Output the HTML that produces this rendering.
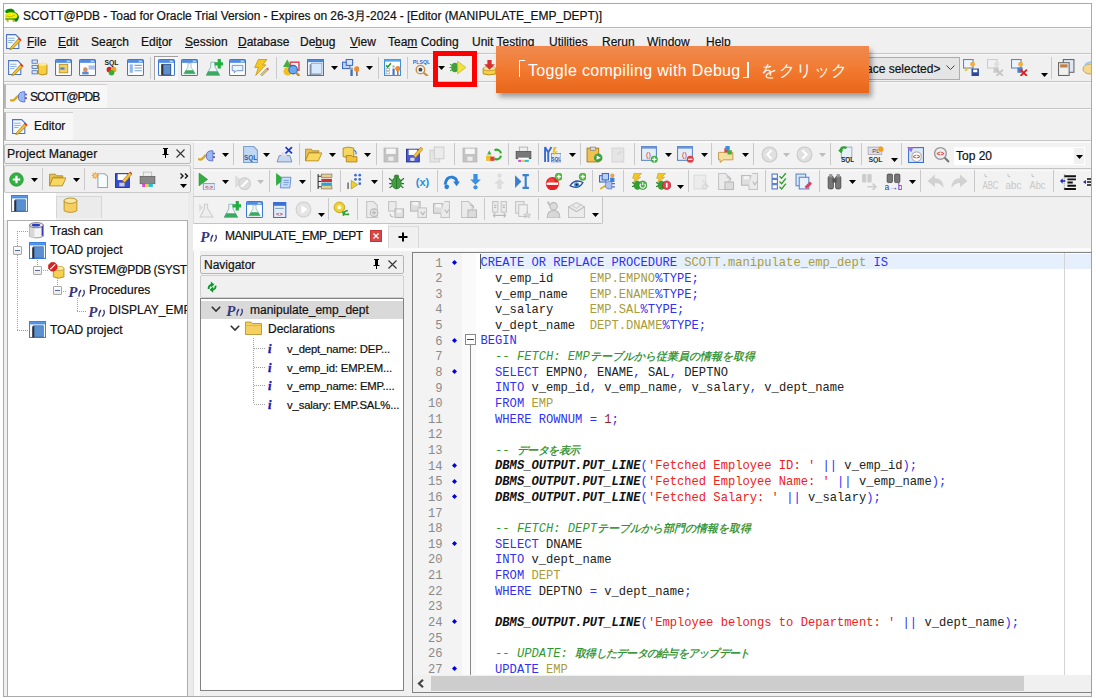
<!DOCTYPE html><html><head><meta charset="utf-8"><style>
html,body{margin:0;padding:0;background:#fff;width:1096px;height:698px;overflow:hidden}
body{position:relative;font-family:"Liberation Sans",sans-serif;font-size:12px;color:#000}
div{position:absolute;box-sizing:border-box}
.t{white-space:pre;line-height:14px;-webkit-text-stroke:0.2px currentColor}
.code{font-family:"Liberation Mono",monospace;font-size:12.13px;line-height:15.6px;white-space:pre;color:#222}
.kw{color:#3030f0}.id{color:#a89c3c}.cm{color:#2e9a2e;font-style:italic}.st{color:#f02020}.pk{font-weight:bold;font-style:italic;color:#111}.nu{color:#9a2020}.pu{color:#3030f0}
.jp{font-size:11px;color:#1a8a1a;-webkit-text-stroke:0.25px #1a8a1a}
u{text-decoration:underline;text-underline-offset:1px}
</style></head><body>
<svg width="0" height="0" style="position:absolute"><filter id="gray"><feColorMatrix type="saturate" values="0"/></filter></svg>

<div style="left:3px;top:3px;width:1089px;height:694px;border:1px solid #a9a9a9;background:#f0f0f0"></div>
<div style="left:4px;top:4px;width:1087px;height:23px;background:#fff"></div>
<div style="left:4px;top:27px;width:1087px;height:1px;background:#b5b5b5"></div>
<div style="left:4px;top:28px;width:1087px;height:1px;background:#f8f8f8"></div>
<svg style="position:absolute;left:4px;top:7px" width="16" height="16" viewBox="0 0 16 16"><path d="M5 3L8 0.5L7 3Z" fill="#8ad08a"/><path d="M0 3L3 4L1 6Z" fill="#9ad09a"/><ellipse cx="6" cy="4.5" rx="4.5" ry="2.8" fill="#0a8a0a"/><path d="M9 5Q14 5 15 10Q15 13 12 15L10 13Z" fill="#0a7a0a"/><ellipse cx="7" cy="9" rx="6.5" ry="3.8" fill="#f2f000"/><path d="M2 9Q7 11 11 8" stroke="#c8b800" fill="none"/><path d="M3 12L4 15M9 12L10 15" stroke="#c8c010" stroke-width="2"/><path d="M1 12H12" stroke="#0a8a0a" stroke-width="1"/></svg>
<div class="t" style="left:23px;top:9px;font-size:12px;color:#111;letter-spacing:-0.05px">SCOTT@PDB - Toad for Oracle Trial Version - Expires on 26-3月-2024 - [Editor (MANIPULATE_EMP_DEPT)]</div>
<div style="left:4px;top:53px;width:1087px;height:1px;background:#c6c6c6"></div>
<div style="left:4px;top:54px;width:1087px;height:1px;background:#f8f8f8"></div>
<svg style="position:absolute;left:5px;top:33px" width="17" height="17" viewBox="0 0 16 16"><path d="M1.5 1.5H10L13 4.5V14.5H1.5Z" fill="#f4f8ff" stroke="#4a72c4"/><path d="M3 5H9M3 7H9M3 9H7" stroke="#8fb0e0"/><path d="M5 14L13 5L15 7L7 15L4.5 15.5Z" fill="#f2c230" stroke="#8a6a10" stroke-width="0.6"/><path d="M12.3 5.7L13.5 4.3L15.5 6.3L14.3 7.5Z" fill="#e03030"/></svg>
<div class="t" style="left:27px;top:35px;font-size:12px;color:#111"><u>F</u>ile</div>
<div class="t" style="left:58px;top:35px;font-size:12px;color:#111"><u>E</u>dit</div>
<div class="t" style="left:91px;top:35px;font-size:12px;color:#111">Sea<u>r</u>ch</div>
<div class="t" style="left:141px;top:35px;font-size:12px;color:#111">Edi<u>t</u>or</div>
<div class="t" style="left:185px;top:35px;font-size:12px;color:#111"><u>S</u>ession</div>
<div class="t" style="left:238px;top:35px;font-size:12px;color:#111"><u>D</u>atabase</div>
<div class="t" style="left:300px;top:35px;font-size:12px;color:#111">De<u>b</u>ug</div>
<div class="t" style="left:350px;top:35px;font-size:12px;color:#111"><u>V</u>iew</div>
<div class="t" style="left:388px;top:35px;font-size:12px;color:#111">Tea<u>m</u> Coding</div>
<div class="t" style="left:472px;top:35px;font-size:12px;color:#111">Unit Testing</div>
<div class="t" style="left:549px;top:35px;font-size:12px;color:#111">Utilities</div>
<div class="t" style="left:602px;top:35px;font-size:12px;color:#111">Rerun</div>
<div class="t" style="left:647px;top:35px;font-size:12px;color:#111">Window</div>
<div class="t" style="left:706px;top:35px;font-size:12px;color:#111">Help</div>
<div style="left:4px;top:81px;width:1087px;height:1px;background:#c6c6c6"></div>
<div style="left:4px;top:82px;width:1087px;height:1px;background:#f8f8f8"></div>
<svg style="position:absolute;left:7px;top:59px" width="17" height="17" viewBox="0 0 16 16"><path d="M1.5 1.5H10L13 4.5V14.5H1.5Z" fill="#f4f8ff" stroke="#4a72c4"/><path d="M3 5H9M3 7H9M3 9H7" stroke="#8fb0e0"/><path d="M5 14L13 5L15 7L7 15L4.5 15.5Z" fill="#f2c230" stroke="#8a6a10" stroke-width="0.6"/><path d="M12.3 5.7L13.5 4.3L15.5 6.3L14.3 7.5Z" fill="#e03030"/></svg>
<svg style="position:absolute;left:31px;top:59px" width="17" height="17" viewBox="0 0 16 16"><rect x="1" y="1" width="5" height="3" fill="#dfe8f8" stroke="#4a72c4" stroke-width="0.8"/><rect x="1" y="6" width="5" height="3" fill="#dfe8f8" stroke="#4a72c4" stroke-width="0.8"/><rect x="1" y="11" width="5" height="3" fill="#dfe8f8" stroke="#4a72c4" stroke-width="0.8"/><path d="M7 5Q11 3 15 5V14Q11 16 7 14Z" fill="#f5cf40" stroke="#b08010" stroke-width="0.8"/><ellipse cx="11" cy="5" rx="4" ry="1.5" fill="#fbe89a"/></svg>
<svg style="position:absolute;left:55px;top:59px" width="17" height="17" viewBox="0 0 16 16"><rect x="0.5" y="0.5" width="15" height="15" rx="1" fill="#fff" stroke="#3a78d8"/><rect x="1" y="1" width="14" height="2.6" fill="#4a8ae6"/><rect x="11" y="1.5" width="3" height="1.5" fill="#c8d4e8"/><rect x="4" y="5" width="8" height="8" fill="#f4d060" stroke="#b09020" stroke-width="0.8"/><rect x="5" y="8" width="4" height="2" fill="#4a80d0"/></svg>
<svg style="position:absolute;left:79px;top:59px" width="17" height="17" viewBox="0 0 16 16"><rect x="0.5" y="0.5" width="15" height="15" rx="1" fill="#fff" stroke="#3a78d8"/><rect x="1" y="1" width="14" height="2.6" fill="#4a8ae6"/><rect x="11" y="1.5" width="3" height="1.5" fill="#c8d4e8"/><circle cx="6" cy="10" r="2.2" fill="#d09060"/><rect x="3" y="12" width="6" height="2.5" fill="#5a8ad0"/><path d="M9 6H15V10H9Z" fill="#a9c0e8"/></svg>
<svg style="position:absolute;left:103px;top:59px" width="17" height="17" viewBox="0 0 16 16"><text x="8" y="6" font-size="6.5" font-family="Liberation Sans" font-weight="bold" text-anchor="middle" fill="#222">SQL</text><circle cx="6" cy="10" r="2.6" fill="#e02020"/><circle cx="10" cy="10" r="2.6" fill="#f0a020"/><circle cx="8" cy="13" r="2.6" fill="#30b030"/></svg>
<svg style="position:absolute;left:127px;top:59px" width="17" height="17" viewBox="0 0 16 16"><rect x="0.5" y="0.5" width="15" height="15" rx="1" fill="#fff" stroke="#3a78d8"/><rect x="1" y="1" width="14" height="2.6" fill="#4a8ae6"/><rect x="11" y="1.5" width="3" height="1.5" fill="#c8d4e8"/><rect x="2.5" y="5" width="3" height="8" fill="#8fb8f0"/><path d="M7 6H14M7 8.5H14M7 11H14" stroke="#7aa0d8"/></svg>
<div style="left:150px;top:57px;width:1px;height:22px;background:#c9c9c9"></div>
<div style="left:154px;top:56px;width:24px;height:24px;border-top:1px solid #a0a0a0;border-left:1px solid #a0a0a0;background:#f8f8f8"></div>
<svg style="position:absolute;left:158px;top:59px" width="17" height="17" viewBox="0 0 16 16"><rect x="0.5" y="0.5" width="15" height="15" rx="1" fill="#fff" stroke="#3a78d8"/><rect x="1" y="1" width="14" height="2.6" fill="#4a8ae6"/><rect x="11" y="1.5" width="3" height="1.5" fill="#c8d4e8"/><rect x="4" y="5" width="8" height="10" fill="#5b8fd0" stroke="#2a4a80" stroke-width="0.8"/><rect x="3" y="5" width="2" height="10" fill="#333"/></svg>
<svg style="position:absolute;left:181px;top:59px" width="17" height="17" viewBox="0 0 16 16"><rect x="0.5" y="0.5" width="15" height="15" rx="1" fill="#fff" stroke="#3a78d8"/><rect x="1" y="1" width="14" height="2.6" fill="#4a8ae6"/><rect x="11" y="1.5" width="3" height="1.5" fill="#c8d4e8"/><path d="M6.5 4H9.5V7.5L13.5 14H2.5L6.5 7.5Z" fill="#eef6f6" stroke="#9ab8b8" stroke-width="0.7"/><path d="M4.5 10.5H11.5L13.3 13.8H2.7Z" fill="#3aaa60"/></svg>
<svg style="position:absolute;left:206px;top:59px" width="17" height="17" viewBox="0 0 16 16"><path d="M4.5 3H8.5V7.5L13 15.5H0L4.5 7.5Z" fill="#eef6f6" stroke="#8ab0b0" stroke-width="0.8"/><path d="M2 11.5H11L13 15.3H0.2Z" fill="#3aaa60"/><path d="M11 0H14V3H16.5V6H14V9H11V6H8V3H11Z" fill="#20b040"/></svg>
<svg style="position:absolute;left:229px;top:59px" width="17" height="17" viewBox="0 0 16 16"><rect x="0.5" y="0.5" width="15" height="15" rx="1" fill="#fff" stroke="#3a78d8"/><rect x="1" y="1" width="14" height="2.6" fill="#4a8ae6"/><rect x="11" y="1.5" width="3" height="1.5" fill="#c8d4e8"/><path d="M3 6H13V11H7L5 13V11H3Z" fill="#eef4ff" stroke="#5a86c8" stroke-width="0.8"/></svg>
<svg style="position:absolute;left:252px;top:59px" width="17" height="17" viewBox="0 0 16 16"><path d="M6 0.5H14L10 5.5H13L3.5 15.5L6 8H2.5Z" fill="#f5c820" stroke="#c09010" stroke-width="0.7"/><path d="M8 14.5L13.5 9L15 10.5L9.5 16Z" fill="#d8c070" stroke="#777" stroke-width="0.4"/><path d="M13.5 9L14.5 8L16 9.5L15 10.5Z" fill="#e05050"/></svg>
<div style="left:276px;top:57px;width:1px;height:22px;background:#c9c9c9"></div>
<svg style="position:absolute;left:283px;top:59px" width="17" height="17" viewBox="0 0 16 16"><path d="M4 0.5L8 7.5H0Z" fill="#40b040"/><rect x="7" y="3" width="8" height="7.5" fill="#f4f4f4" stroke="#e05060" stroke-width="1.5"/><circle cx="4.5" cy="11.5" r="4" fill="#f0c020"/><circle cx="9.5" cy="10" r="4" fill="#6aa8f0" stroke="#2a60c0" stroke-width="1"/><path d="M12.5 13L15.5 16" stroke="#c09020" stroke-width="2.2"/></svg>
<svg style="position:absolute;left:307px;top:59px" width="17" height="17" viewBox="0 0 16 16"><rect x="0.5" y="0.5" width="15" height="15" fill="#fff" stroke="#3a70d8"/><rect x="0.5" y="0.5" width="15" height="2.5" fill="#4a88e0"/><rect x="4" y="4" width="10" height="10" fill="#d8e8fc" stroke="#7aa0d8" stroke-width="0.8"/><path d="M3 5V15H13" stroke="#5a6a88" stroke-width="1" fill="none"/></svg>
<svg style="position:absolute;left:331px;top:66px" width="7" height="4" viewBox="0 0 7 4"><path d="M0 0H7L3.5 4Z" fill="#000"/></svg>
<svg style="position:absolute;left:342px;top:59px" width="17" height="17" viewBox="0 0 16 16"><rect x="0.5" y="3" width="7" height="6" fill="#c0d4f8" stroke="#3a6ac8"/><rect x="4" y="0.5" width="6" height="5.5" fill="#d8e4fa" stroke="#3a6ac8"/><path d="M9 9.5V16" stroke="#3a70c0" stroke-width="2.2"/><path d="M7.6 9H10.4" stroke="#9aa" stroke-width="2"/><path d="M14 11V16" stroke="#777" stroke-width="1.6"/><circle cx="14" cy="9.5" r="2.6" fill="#f08a30"/></svg>
<svg style="position:absolute;left:366px;top:66px" width="7" height="4" viewBox="0 0 7 4"><path d="M0 0H7L3.5 4Z" fill="#000"/></svg>
<div style="left:378px;top:57px;width:1px;height:22px;background:#c9c9c9"></div>
<svg style="position:absolute;left:384px;top:59px" width="17" height="17" viewBox="0 0 16 16"><rect x="0.5" y="0.5" width="15" height="15" fill="#fff" stroke="#3a90e0"/><rect x="0.5" y="0.5" width="15" height="2" fill="#5aa8f0"/><path d="M2 6L3.5 7.5L6.5 4" stroke="#20a020" stroke-width="1.5" fill="none"/><rect x="2" y="9" width="3" height="2" fill="#fff" stroke="#999" stroke-width="0.6"/><rect x="2" y="12" width="3" height="2" fill="#fff" stroke="#999" stroke-width="0.6"/><path d="M9 9V15" stroke="#3a70d0" stroke-width="2"/><path d="M8 7H10" stroke="#aaa" stroke-width="2"/><path d="M13 11V15" stroke="#777" stroke-width="1.4"/><circle cx="13" cy="9" r="2.4" fill="#f08a30"/></svg>
<div style="left:407px;top:57px;width:1px;height:22px;background:#c9c9c9"></div>
<svg style="position:absolute;left:413px;top:59px" width="17" height="17" viewBox="0 0 16 16"><text x="8" y="5" font-size="5" font-family="Liberation Sans" font-weight="bold" text-anchor="middle" fill="#3a6ad0">PLSQL</text><circle cx="7" cy="10" r="4" fill="#e8eef4" stroke="#c89040" stroke-width="1.3"/><circle cx="7" cy="10" r="1.8" fill="#444"/><path d="M10 13L14 16" stroke="#c89040" stroke-width="2"/></svg>
<svg style="position:absolute;left:438px;top:66px" width="7" height="4" viewBox="0 0 7 4"><path d="M0 0H7L3.5 4Z" fill="#000"/></svg>
<svg style="position:absolute;left:449px;top:59px" width="17" height="17" viewBox="0 0 16 16"><ellipse cx="5.5" cy="8" rx="3.5" ry="4.5" fill="#40a040"/><path d="M1 5L3 6M1 11L3 10M0.5 8H2" stroke="#40a040"/><path d="M8 2L16 8L8 14Z" fill="#f0e040" stroke="#c0b020" stroke-width="0.6"/></svg>
<svg style="position:absolute;left:481px;top:59px" width="17" height="17" viewBox="0 0 16 16"><path d="M2 9H14V14Q8 16 2 14Z" fill="#f5d040" stroke="#b08010" stroke-width="0.8"/><ellipse cx="8" cy="9" rx="6" ry="2" fill="#fbe8a0" stroke="#b08010" stroke-width="0.6"/><path d="M6 1H10V5H13L8 10L3 5H6Z" fill="#d83030"/></svg>
<div style="left:840px;top:57px;width:120px;height:23px;background:#e5e5e5;border:1px solid #adadad"></div>
<div class="t" style="left:866px;top:62px;font-size:12px;color:#111">ace selected&gt;</div>
<svg style="position:absolute;left:946px;top:65px" width="9" height="6" viewBox="0 0 9 6"><path d="M0.5 0.5L4.5 4.5L8.5 0.5" stroke="#444" fill="none"/></svg>
<svg style="position:absolute;left:963px;top:59px" width="17" height="17" viewBox="0 0 16 16"><rect x="0.5" y="0.5" width="9" height="8" fill="#eef4ff" stroke="#5a86c8"/><circle cx="9" cy="5" r="2.3" fill="#f0b040"/><path d="M5 8L2 11" stroke="#f0c040" stroke-width="2"/><rect x="8" y="9" width="7" height="7" fill="#2a4a98"/><rect x="9.5" y="10" width="4" height="2.5" fill="#fff"/></svg>
<svg style="position:absolute;left:987px;top:59px" width="17" height="17" viewBox="0 0 16 16"><g opacity="0.32" filter="url(#gray)"><rect x="0.5" y="0.5" width="9" height="8" fill="#eef4ff" stroke="#5a86c8"/><circle cx="9" cy="5" r="2.3" fill="#f0b040"/><rect x="6" y="8" width="5" height="5" fill="#4a80d0"/><path d="M9 10L15 16M15 10L9 16" stroke="#e02020" stroke-width="1.8"/></g></svg>
<svg style="position:absolute;left:1011px;top:59px" width="17" height="17" viewBox="0 0 16 16"><rect x="0.5" y="0.5" width="9" height="8" fill="#eef4ff" stroke="#5a86c8"/><circle cx="9" cy="5" r="2.3" fill="#f0b040"/><rect x="6" y="8" width="5" height="5" fill="#4a80d0"/><path d="M9 10L15 16M15 10L9 16" stroke="#e02020" stroke-width="1.8"/></svg>
<svg style="position:absolute;left:1041px;top:73px" width="7" height="4" viewBox="0 0 7 4"><path d="M0 0H7L3.5 4Z" fill="#000"/></svg>
<div style="left:1051px;top:57px;width:1px;height:22px;background:#c9c9c9"></div>
<svg style="position:absolute;left:1058px;top:59px" width="17" height="17" viewBox="0 0 16 16"><rect x="5" y="0.5" width="10" height="12" fill="#dde8f4" stroke="#666"/><rect x="0.5" y="3.5" width="10" height="12" fill="#f0f0f0" stroke="#666"/><rect x="2" y="5" width="7" height="3" fill="#c08040"/></svg>
<div style="left:1081px;top:60px;width:10px;height:17px;overflow:hidden"></div>
<svg style="position:absolute;left:1081px;top:60px" width="10" height="17" viewBox="0 0 10 17"><ellipse cx="9" cy="9" rx="7" ry="5" fill="#f5d890" stroke="#c09040" stroke-width="0.8"/><path d="M4 5Q9 0 14 4" stroke="#9ac8f0" stroke-width="2" fill="none"/></svg>
<div style="left:4px;top:108px;width:1087px;height:1px;background:#c6c6c6"></div>
<div style="left:4px;top:109px;width:1087px;height:1px;background:#f8f8f8"></div>
<div style="left:4px;top:84px;width:103px;height:24px;background:#f7f7f7;border-top:1px solid #cfcfcf;border-left:2px solid #b8b8b8"></div>
<svg style="position:absolute;left:10px;top:87px" width="17" height="17" viewBox="0 0 16 16"><path d="M1 12.5Q3 13.5 5 11T8.5 8.5" stroke="#d8a820" stroke-width="2.3" fill="none" stroke-linecap="round"/><path d="M8 8.5Q8 5 12 4.5H14V14H12Q8 13.5 8 10.5Z" fill="#9ab8f4" stroke="#5a6ac8" stroke-width="0.8"/><path d="M14 7H16.5M14 10.5H16.5" stroke="#6a5ab0" stroke-width="1.5"/></svg>
<div class="t" style="left:30px;top:90px;font-size:12px;color:#111;letter-spacing:-0.9px">SCOTT@PDB</div>
<div style="left:4px;top:140px;width:1087px;height:1px;background:#c6c6c6"></div>
<div style="left:4px;top:141px;width:1087px;height:1px;background:#fafafa"></div>
<div style="left:4px;top:112px;width:69px;height:28px;background:#f7f7f7;border-top:1px solid #cfcfcf;border-left:2px solid #b8b8b8"></div>
<svg style="position:absolute;left:11px;top:118px" width="17" height="17" viewBox="0 0 16 16"><path d="M1.5 1.5H10L13 4.5V14.5H1.5Z" fill="#f4f8ff" stroke="#4a72c4"/><path d="M3 5H9M3 7H9M3 9H7" stroke="#8fb0e0"/><path d="M5 14L13 5L15 7L7 15L4.5 15.5Z" fill="#f2c230" stroke="#8a6a10" stroke-width="0.6"/><path d="M12.3 5.7L13.5 4.3L15.5 6.3L14.3 7.5Z" fill="#e03030"/></svg>
<div class="t" style="left:34px;top:119px;font-size:12px;color:#111">Editor</div>
<div style="left:4px;top:144px;width:187px;height:20px;border:1px solid #b9b9b9;border-radius:2px;background:#f0f0f0"></div>
<div class="t" style="left:7px;top:147px;font-size:12.3px;color:#111">Project Manager</div>
<svg style="position:absolute;left:161px;top:147px" width="9" height="12" viewBox="0 0 9 12"><path d="M2 1H7V2H6V7H7.5V8H5V11H4V8H1.5V7H3V2H2Z" fill="#000"/></svg>
<svg style="position:absolute;left:176px;top:149px" width="9" height="9" viewBox="0 0 9 9"><path d="M0.5 0.5L8.5 8.5M8.5 0.5L0.5 8.5" stroke="#333" stroke-width="1.1"/></svg>
<div style="left:4px;top:165px;width:187px;height:28px;border:1px solid #c9c9c9;border-radius:2px;background:#f0f0f0"></div>
<svg style="position:absolute;left:9px;top:172px" width="15" height="15" viewBox="0 0 16 16"><circle cx="8" cy="8" r="7.3" fill="#30b040" stroke="#208030" stroke-width="0.6"/><path d="M8 4V12M4 8H12" stroke="#fff" stroke-width="2.3"/></svg>
<svg style="position:absolute;left:31px;top:178px" width="7" height="4" viewBox="0 0 7 4"><path d="M0 0H7L3.5 4Z" fill="#000"/></svg>
<div style="left:42px;top:168px;width:1px;height:22px;background:#c9c9c9"></div>
<svg style="position:absolute;left:49px;top:171px" width="17" height="17" viewBox="0 0 16 16"><path d="M0.5 3H6L7 4.5H13V6H4L0.5 14Z" fill="#e8c050" stroke="#b08a20" stroke-width="0.8"/><path d="M3.5 6.5H16L12.5 14H0.5Z" fill="#f8d860" stroke="#b08a20" stroke-width="0.8"/></svg>
<svg style="position:absolute;left:73px;top:178px" width="7" height="4" viewBox="0 0 7 4"><path d="M0 0H7L3.5 4Z" fill="#000"/></svg>
<div style="left:84px;top:168px;width:1px;height:22px;background:#c9c9c9"></div>
<svg style="position:absolute;left:91px;top:171px" width="17" height="17" viewBox="0 0 16 16"><path d="M6.5 2.5H13L15.5 5V15.5H6.5Z" fill="#f8fbfb" stroke="#9aa8a8"/><path d="M4 0.5L4.8 2.6L6.8 1.5L6 3.6L8 4.3L6 5L6.8 7.1L4.8 6L4 8L3.2 6L1.2 7.1L2 5L0 4.3L2 3.6L1.2 1.5L3.2 2.6Z" fill="#ff9a30"/><circle cx="4" cy="4.3" r="1.5" fill="#ffd080"/></svg>
<svg style="position:absolute;left:115px;top:171px" width="17" height="17" viewBox="0 0 16 16"><rect x="0.5" y="2.5" width="13" height="13" fill="#3a4ad0" stroke="#1a2a80" stroke-width="0.8"/><rect x="2.5" y="3" width="9" height="5.5" fill="#fff"/><rect x="4" y="11" width="5" height="3.5" fill="#ccd"/><path d="M7 9L14 1L16 3L9 11Z" fill="#f0c040" stroke="#a07010" stroke-width="0.5"/><path d="M14 1L16 3" stroke="#e05030" stroke-width="1.5"/></svg>
<svg style="position:absolute;left:139px;top:171px" width="17" height="17" viewBox="0 0 16 16"><rect x="4" y="1" width="8" height="5" fill="#eee" stroke="#aaa" stroke-width="0.6"/><rect x="1" y="5" width="14" height="7" fill="#888" stroke="#555" stroke-width="0.6"/><rect x="3" y="12" width="3" height="3" fill="#e040e0"/><rect x="6" y="12" width="3" height="3" fill="#f0d020"/><rect x="9" y="12" width="4" height="3" fill="#20c0e0"/></svg>
<svg style="position:absolute;left:180px;top:173px" width="9" height="6" viewBox="0 0 9 6"><path d="M0.5 0.5L3 3L0.5 5.5M5 0.5L7.5 3L5 5.5" stroke="#111" stroke-width="1.4" fill="none"/></svg>
<svg style="position:absolute;left:180px;top:184px" width="7" height="4" viewBox="0 0 7 4"><path d="M0 0H7L3.5 4Z" fill="#000"/></svg>
<div style="left:4px;top:193px;width:52px;height:27px;background:#fff"></div>
<svg style="position:absolute;left:11px;top:195px" width="17" height="17" viewBox="0 0 16 16"><rect x="0.5" y="0.5" width="15" height="15" fill="#fff" stroke="#3a80e0"/><rect x="1" y="1" width="14" height="2.2" fill="#4a90ea"/><rect x="4" y="4.5" width="9.5" height="10.5" fill="#5a90d0" stroke="#3a60a0" stroke-width="0.6"/><rect x="3" y="5" width="2" height="10.5" fill="#2a3040"/></svg>
<div style="left:56px;top:196px;width:46px;height:22px;background:#ebebeb;border:1px solid #d6d6d6;border-bottom:none"></div>
<svg style="position:absolute;left:62px;top:197px" width="17" height="17" viewBox="0 0 16 16"><path d="M2 3V13Q8 16 14 13V3Z" fill="#f5d060" stroke="#b08a20" stroke-width="0.8"/><ellipse cx="8" cy="3.5" rx="6" ry="2.5" fill="#fbe8a0" stroke="#b08a20" stroke-width="0.8"/></svg>
<div style="left:7px;top:220px;width:181px;height:476px;background:#fff;border:1px solid #adadad;border-bottom:none"></div>
<div style="left:17px;top:231px;width:1px;height:99px;background:repeating-linear-gradient(180deg,#a0a0a0 0 1px,transparent 1px 2px)"></div>
<div style="left:17px;top:231px;width:11px;height:1px;background:repeating-linear-gradient(90deg,#a0a0a0 0 1px,transparent 1px 2px)"></div>
<div style="left:17px;top:330px;width:11px;height:1px;background:repeating-linear-gradient(90deg,#a0a0a0 0 1px,transparent 1px 2px)"></div>
<div style="left:37px;top:258px;width:1px;height:12px;background:repeating-linear-gradient(180deg,#a0a0a0 0 1px,transparent 1px 2px)"></div>
<div style="left:41px;top:270px;width:7px;height:1px;background:repeating-linear-gradient(90deg,#a0a0a0 0 1px,transparent 1px 2px)"></div>
<div style="left:57px;top:278px;width:1px;height:12px;background:repeating-linear-gradient(180deg,#a0a0a0 0 1px,transparent 1px 2px)"></div>
<div style="left:61px;top:291px;width:6px;height:1px;background:repeating-linear-gradient(90deg,#a0a0a0 0 1px,transparent 1px 2px)"></div>
<div style="left:77px;top:298px;width:1px;height:13px;background:repeating-linear-gradient(180deg,#a0a0a0 0 1px,transparent 1px 2px)"></div>
<div style="left:77px;top:311px;width:10px;height:1px;background:repeating-linear-gradient(90deg,#a0a0a0 0 1px,transparent 1px 2px)"></div>
<div style="left:13px;top:246px;width:9px;height:9px;border:1px solid #a8a8a8;border-radius:1px;background:linear-gradient(#fff,#e8e8e8)"></div>
<div style="left:15px;top:250px;width:5px;height:1px;background:#5068a8"></div>
<div style="left:33px;top:266px;width:9px;height:9px;border:1px solid #a8a8a8;border-radius:1px;background:linear-gradient(#fff,#e8e8e8)"></div>
<div style="left:35px;top:270px;width:5px;height:1px;background:#5068a8"></div>
<div style="left:53px;top:286px;width:9px;height:9px;border:1px solid #a8a8a8;border-radius:1px;background:linear-gradient(#fff,#e8e8e8)"></div>
<div style="left:55px;top:290px;width:5px;height:1px;background:#5068a8"></div>
<div style="left:0;top:0;width:1096px;height:698px;clip-path:inset(221px 909px 2px 8px)">
<svg style="position:absolute;left:28px;top:222px" width="17" height="17" viewBox="0 0 16 16"><path d="M1.5 3V13.5Q8 16.5 14.5 13.5V3Z" fill="#f4f4f4" stroke="#888" stroke-width="0.8"/><path d="M1.5 3V13.5Q4 15 6 15V4Z" fill="#d8d8d8"/><ellipse cx="8" cy="3" rx="6.5" ry="2.4" fill="#e8e8f0" stroke="#666" stroke-width="0.8"/><ellipse cx="7.5" cy="3" rx="4" ry="1.3" fill="#2a3ac0"/><path d="M13.5 4V13" stroke="#3a3ab8" stroke-width="1.4"/></svg>
<div class="t" style="left:50px;top:224px;font-size:12px;color:#111">Trash can</div>
<svg style="position:absolute;left:29px;top:242px" width="17" height="17" viewBox="0 0 16 16"><rect x="0.5" y="0.5" width="15" height="15" fill="#fff" stroke="#3a80e0"/><rect x="1" y="1" width="14" height="2.2" fill="#4a90ea"/><rect x="4" y="4.5" width="9.5" height="10.5" fill="#5a90d0" stroke="#3a60a0" stroke-width="0.6"/><rect x="3" y="5" width="2" height="10.5" fill="#2a3040"/></svg>
<div class="t" style="left:50px;top:243px;font-size:12px;color:#111">TOAD project</div>
<svg style="position:absolute;left:48px;top:262px" width="17" height="17" viewBox="0 0 16 16"><path d="M5 6V14Q10 16.5 15 14V6Z" fill="#f5d050" stroke="#b08a20" stroke-width="0.8"/><ellipse cx="10" cy="6" rx="5" ry="2" fill="#fbe8a0" stroke="#b08a20" stroke-width="0.6"/><path d="M2.8 0.5H6.2L8.5 2.8V6.2L6.2 8.5H2.8L0.5 6.2V2.8Z" fill="#e02020" stroke="#b01010" stroke-width="0.5"/><path d="M2.2 6.8L6.8 2.2" stroke="#fff" stroke-width="1.1"/></svg>
<div class="t" style="left:69px;top:263px;font-size:12px;color:#111;letter-spacing:-0.45px">SYSTEM@PDB (SYSTE</div>
<svg style="position:absolute;left:68px;top:283px" width="19" height="16" viewBox="0 0 19 16"><text x="0.3" y="13.9" font-family="Liberation Serif" font-style="italic" font-weight="bold" font-size="15" fill="#38387e">P</text><path d="M13 7Q10.3 10.5 11.2 13.6" stroke="#38387e" stroke-width="1.3" fill="none"/><path d="M15.6 6.8Q17.6 10 14.2 13.6" stroke="#38387e" stroke-width="1.3" fill="none"/></svg>
<div class="t" style="left:89px;top:283px;font-size:12px;color:#111">Procedures</div>
<svg style="position:absolute;left:88px;top:303px" width="19" height="16" viewBox="0 0 19 16"><text x="0.3" y="13.9" font-family="Liberation Serif" font-style="italic" font-weight="bold" font-size="15" fill="#38387e">P</text><path d="M13 7Q10.3 10.5 11.2 13.6" stroke="#38387e" stroke-width="1.3" fill="none"/><path d="M15.6 6.8Q17.6 10 14.2 13.6" stroke="#38387e" stroke-width="1.3" fill="none"/></svg>
<div class="t" style="left:109px;top:303px;font-size:12px;color:#111">DISPLAY_EMP</div>
<svg style="position:absolute;left:29px;top:321px" width="17" height="17" viewBox="0 0 16 16"><rect x="0.5" y="0.5" width="15" height="15" fill="#fff" stroke="#3a80e0"/><rect x="1" y="1" width="14" height="2.2" fill="#4a90ea"/><rect x="4" y="4.5" width="9.5" height="10.5" fill="#5a90d0" stroke="#3a60a0" stroke-width="0.6"/><rect x="3" y="5" width="2" height="10.5" fill="#2a3040"/></svg>
<div class="t" style="left:50px;top:323px;font-size:12px;color:#111">TOAD project</div>
</div>
<div style="left:193px;top:142px;width:898px;height:27px;background:#f2f2f2;border-left:1px solid #dcdcdc;border-top:1px solid #fafafa;border-bottom:1px solid #c4c4c4"></div>
<div style="left:193px;top:170px;width:898px;height:27px;background:#f2f2f2;border-left:1px solid #dcdcdc;border-top:1px solid #fafafa;border-bottom:1px solid #c4c4c4"></div>
<div style="left:193px;top:197px;width:410px;height:27px;background:#f2f2f2;border-left:1px solid #dcdcdc;border-right:1px solid #c4c4c4;border-bottom:1px solid #c4c4c4;border-bottom-right-radius:2px"></div>
<svg style="position:absolute;left:198px;top:146px" width="17" height="17" viewBox="0 0 16 16"><path d="M1 12.5Q3 13.5 5 11T8.5 8.5" stroke="#d8a820" stroke-width="2.3" fill="none" stroke-linecap="round"/><path d="M8 8.5Q8 5 12 4.5H14V14H12Q8 13.5 8 10.5Z" fill="#9ab8f4" stroke="#5a6ac8" stroke-width="0.8"/><path d="M14 7H16.5M14 10.5H16.5" stroke="#6a5ab0" stroke-width="1.5"/></svg>
<svg style="position:absolute;left:222px;top:153px" width="7" height="4" viewBox="0 0 7 4"><path d="M0 0H7L3.5 4Z" fill="#000"/></svg>
<div style="left:233px;top:143px;width:1px;height:22px;background:#c9c9c9"></div>
<svg style="position:absolute;left:242px;top:146px" width="17" height="17" viewBox="0 0 16 16"><path d="M1.5 0.5H11L14.5 4V15.5H1.5Z" fill="#c0d8f4" stroke="#7aa0d0"/><text x="8" y="13" font-size="6" font-family="Liberation Sans" font-weight="bold" text-anchor="middle" fill="#2a5ab0">SQL</text></svg>
<svg style="position:absolute;left:263px;top:153px" width="7" height="4" viewBox="0 0 7 4"><path d="M0 0H7L3.5 4Z" fill="#000"/></svg>
<svg style="position:absolute;left:276px;top:146px" width="17" height="17" viewBox="0 0 16 16"><path d="M1 15L3 9H13L15 15Z" fill="#c8d8ec" stroke="#6a8ab8" stroke-width="0.8"/><rect x="5" y="6" width="5" height="4" fill="#dde"/><path d="M9 1L15 7M15 1L9 7" stroke="#1a3ad0" stroke-width="1.6"/></svg>
<div style="left:299px;top:143px;width:1px;height:22px;background:#c9c9c9"></div>
<svg style="position:absolute;left:305px;top:146px" width="17" height="17" viewBox="0 0 16 16"><path d="M0.5 3H6L7 4.5H13V6H4L0.5 14Z" fill="#e8c050" stroke="#b08a20" stroke-width="0.8"/><path d="M3.5 6.5H16L12.5 14H0.5Z" fill="#f8d860" stroke="#b08a20" stroke-width="0.8"/></svg>
<svg style="position:absolute;left:329px;top:153px" width="7" height="4" viewBox="0 0 7 4"><path d="M0 0H7L3.5 4Z" fill="#000"/></svg>
<svg style="position:absolute;left:341px;top:146px" width="17" height="17" viewBox="0 0 16 16"><path d="M2 2Q7 0 12 2V10Q7 12 2 10Z" fill="#f5d860" stroke="#b08010" stroke-width="0.8"/><path d="M5 9H10L11 10H15V15H5Z" fill="#f0c040" stroke="#b08010" stroke-width="0.8"/><path d="M12 4Q15 5 14 8" stroke="#3a70c0" fill="none"/></svg>
<svg style="position:absolute;left:364px;top:153px" width="7" height="4" viewBox="0 0 7 4"><path d="M0 0H7L3.5 4Z" fill="#000"/></svg>
<div style="left:376px;top:143px;width:1px;height:22px;background:#c9c9c9"></div>
<svg style="position:absolute;left:383px;top:146px" width="17" height="17" viewBox="0 0 16 16"><g opacity="0.32" filter="url(#gray)"><rect x="1" y="2" width="13" height="13" fill="#3a5ac8" stroke="#1a2a80" stroke-width="0.8"/><rect x="3" y="2.5" width="9" height="5" fill="#fff"/><rect x="5" y="10" width="5" height="4" fill="#ddd"/></g></svg>
<svg style="position:absolute;left:406px;top:146px" width="17" height="17" viewBox="0 0 16 16"><rect x="0.5" y="3" width="12" height="12" fill="#4a5ad8" stroke="#1a2a80" stroke-width="0.8"/><rect x="2.5" y="3.5" width="8" height="5" fill="#fff"/><rect x="4" y="11" width="4" height="3" fill="#ddd"/><path d="M7 9L14 1L16 3L9 11Z" fill="#f0c040" stroke="#a07010" stroke-width="0.5"/></svg>
<svg style="position:absolute;left:429px;top:146px" width="17" height="17" viewBox="0 0 16 16"><g opacity="0.32" filter="url(#gray)"><rect x="1" y="4" width="9" height="11" fill="#ccc" stroke="#888"/><rect x="5" y="1" width="9" height="11" fill="#ddd" stroke="#888"/></g></svg>
<div style="left:454px;top:143px;width:1px;height:22px;background:#c9c9c9"></div>
<svg style="position:absolute;left:462px;top:146px" width="17" height="17" viewBox="0 0 16 16"><g opacity="0.32" filter="url(#gray)"><rect x="1" y="2" width="13" height="13" fill="#3a5ac8" stroke="#1a2a80" stroke-width="0.8"/><rect x="3" y="2.5" width="9" height="5" fill="#fff"/><rect x="5" y="10" width="5" height="4" fill="#ddd"/></g></svg>
<svg style="position:absolute;left:485px;top:146px" width="17" height="17" viewBox="0 0 16 16"><path d="M2 8L4 4L6 8Z" fill="#40b040"/><rect x="1" y="9" width="5" height="5" fill="#f0c030"/><rect x="5" y="10" width="4" height="4" fill="#e04040"/><path d="M9 4A4 4 0 0 1 15 7" stroke="#30b030" stroke-width="2" fill="none"/><path d="M15 9A4 4 0 0 1 9 12" stroke="#30b030" stroke-width="2" fill="none"/></svg>
<div style="left:508px;top:143px;width:1px;height:22px;background:#c9c9c9"></div>
<svg style="position:absolute;left:515px;top:146px" width="17" height="17" viewBox="0 0 16 16"><rect x="4" y="1" width="8" height="5" fill="#eee" stroke="#999" stroke-width="0.6"/><rect x="1" y="5" width="14" height="7" fill="#777" stroke="#444" stroke-width="0.6"/><rect x="3" y="11" width="10" height="3" fill="#fff"/><path d="M3 14H6M6 14H9M9 14H13" stroke-width="2"/><rect x="3" y="13" width="3" height="2" fill="#e040e0"/><rect x="6" y="13" width="3" height="2" fill="#f0d020"/><rect x="9" y="13" width="4" height="2" fill="#20c0e0"/></svg>
<div style="left:538px;top:143px;width:1px;height:22px;background:#c9c9c9"></div>
<svg style="position:absolute;left:544px;top:146px" width="17" height="17" viewBox="0 0 16 16"><path d="M1 1V15M1 1L4 6L7 1M4 6V15" stroke="#3a6ad0" stroke-width="1.8" fill="none"/><rect x="7" y="7" width="9" height="8" fill="#dde8f8" stroke="#5a86c8" stroke-width="0.7"/><path d="M9 1L12 1L10 5H13L9 9L10 6H8Z" fill="#f0c020"/><text x="11.5" y="14" font-size="4.5" font-family="Liberation Sans" font-weight="bold" text-anchor="middle" fill="#2a5ab0">SQL</text></svg>
<svg style="position:absolute;left:569px;top:153px" width="7" height="4" viewBox="0 0 7 4"><path d="M0 0H7L3.5 4Z" fill="#000"/></svg>
<div style="left:580px;top:143px;width:1px;height:22px;background:#c9c9c9"></div>
<svg style="position:absolute;left:586px;top:146px" width="17" height="17" viewBox="0 0 16 16"><rect x="1" y="2" width="11" height="13" fill="#f0c050" stroke="#a07010" stroke-width="0.8"/><rect x="4" y="1" width="5" height="3" fill="#ddd" stroke="#777" stroke-width="0.6"/><circle cx="11.5" cy="11" r="4" fill="#40a040"/><path d="M10 9L14 11L10 13Z" fill="#fff"/></svg>
<svg style="position:absolute;left:611px;top:146px" width="17" height="17" viewBox="0 0 16 16"><g opacity="0.32" filter="url(#gray)"><rect x="1" y="2" width="11" height="13" fill="#ccc" stroke="#999"/><path d="M6 8L10 5" stroke="#aaa" stroke-width="2"/></g></svg>
<div style="left:634px;top:143px;width:1px;height:22px;background:#c9c9c9"></div>
<svg style="position:absolute;left:641px;top:146px" width="17" height="17" viewBox="0 0 16 16"><rect x="0.5" y="0.5" width="14" height="13" fill="#e4eef8" stroke="#5a86c8"/><rect x="0.5" y="0.5" width="14" height="2" fill="#6a96d8"/><text x="7" y="10" font-size="7" font-family="Liberation Sans" text-anchor="middle" fill="#d03030">()</text><circle cx="12.5" cy="12.5" r="3.3" fill="#40b040"/><path d="M12.5 10.5V14.5M10.5 12.5H14.5" stroke="#fff" stroke-width="1.2"/></svg>
<svg style="position:absolute;left:665px;top:153px" width="7" height="4" viewBox="0 0 7 4"><path d="M0 0H7L3.5 4Z" fill="#000"/></svg>
<svg style="position:absolute;left:677px;top:146px" width="17" height="17" viewBox="0 0 16 16"><rect x="0.5" y="0.5" width="14" height="13" fill="#e4eef8" stroke="#5a86c8"/><rect x="0.5" y="0.5" width="14" height="2" fill="#6a96d8"/><text x="7" y="10" font-size="7" font-family="Liberation Sans" text-anchor="middle" fill="#d03030">()</text><circle cx="12.5" cy="12.5" r="3.3" fill="#e04040"/><path d="M10.5 12.5H14.5" stroke="#fff" stroke-width="1.2"/></svg>
<svg style="position:absolute;left:701px;top:153px" width="7" height="4" viewBox="0 0 7 4"><path d="M0 0H7L3.5 4Z" fill="#000"/></svg>
<div style="left:711px;top:143px;width:1px;height:22px;background:#c9c9c9"></div>
<svg style="position:absolute;left:718px;top:146px" width="17" height="17" viewBox="0 0 16 16"><path d="M0.5 6H14V13H5L2 15.5V13H0.5Z" fill="#f5e0a0" stroke="#c09040" stroke-width="0.8"/><rect x="6" y="2" width="4" height="4" fill="#e04040"/><rect x="9" y="4" width="4" height="4" fill="#40b040"/><rect x="7" y="0" width="4" height="4" fill="#3a90e0"/></svg>
<svg style="position:absolute;left:742px;top:153px" width="7" height="4" viewBox="0 0 7 4"><path d="M0 0H7L3.5 4Z" fill="#000"/></svg>
<div style="left:753px;top:143px;width:1px;height:22px;background:#c9c9c9"></div>
<svg style="position:absolute;left:761px;top:146px" width="17" height="17" viewBox="0 0 16 16"><circle cx="8" cy="8" r="7" fill="#e0e0e0" stroke="#c8c8c8"/><path d="M10 4L6 8L10 12" stroke="#fff" stroke-width="2" fill="none"/></svg>
<svg style="position:absolute;left:783px;top:153px" width="7" height="4" viewBox="0 0 7 4"><path d="M0 0H7L3.5 4Z" fill="#bdbdbd"/></svg>
<svg style="position:absolute;left:796px;top:146px" width="17" height="17" viewBox="0 0 16 16"><circle cx="8" cy="8" r="7" fill="#e0e0e0" stroke="#c8c8c8"/><path d="M6 4L10 8L6 12" stroke="#fff" stroke-width="2" fill="none"/></svg>
<svg style="position:absolute;left:819px;top:153px" width="7" height="4" viewBox="0 0 7 4"><path d="M0 0H7L3.5 4Z" fill="#bdbdbd"/></svg>
<div style="left:830px;top:143px;width:1px;height:22px;background:#c9c9c9"></div>
<svg style="position:absolute;left:837px;top:146px" width="17" height="17" viewBox="0 0 16 16"><rect x="4" y="1" width="10" height="10" fill="#e8f0f8" stroke="#8a9ab0" stroke-width="0.7"/><path d="M3 4A4 4 0 0 1 9 2" stroke="#30a030" stroke-width="2" fill="none"/><path d="M1 4L4 7L6 3Z" fill="#30a030"/><text x="10" y="15.5" font-size="6" font-family="Liberation Sans" font-weight="bold" text-anchor="middle" fill="#222">SQL</text></svg>
<div style="left:861px;top:143px;width:1px;height:22px;background:#c9c9c9"></div>
<svg style="position:absolute;left:867px;top:146px" width="17" height="17" viewBox="0 0 16 16"><rect x="1" y="1" width="13" height="7" fill="#dde" stroke="#889" stroke-width="0.5"/><text x="5" y="7" font-size="5.5" font-family="Liberation Sans" fill="#444">PL</text><text x="8" y="15" font-size="6.5" font-family="Liberation Sans" font-weight="bold" text-anchor="middle" fill="#333">SQL</text><circle cx="13" cy="3" r="2.5" fill="#f0a020"/></svg>
<svg style="position:absolute;left:891px;top:158px" width="7" height="4" viewBox="0 0 7 4"><path d="M0 0H7L3.5 4Z" fill="#000"/></svg>
<div style="left:901px;top:143px;width:1px;height:22px;background:#c9c9c9"></div>
<svg style="position:absolute;left:907px;top:146px" width="17" height="17" viewBox="0 0 16 16"><rect x="1.5" y="1.5" width="14" height="14" fill="#dde8f8" stroke="#3a70d0"/><circle cx="9" cy="10" r="4.5" fill="#fff" stroke="#b0b0b0"/><text x="9" y="12.5" font-size="6" font-family="Liberation Sans" font-weight="bold" text-anchor="middle" fill="#d03030">&lt;&gt;</text><path d="M0 1L6 1L4 6Z" fill="#9a70e0"/></svg>
<svg style="position:absolute;left:933px;top:146px" width="17" height="17" viewBox="0 0 16 16"><circle cx="7" cy="7" r="5.5" fill="#eee" stroke="#999" stroke-width="1.3"/><text x="7" y="9.5" font-size="6" font-family="Liberation Sans" font-weight="bold" text-anchor="middle" fill="#d03030">&lt;&gt;</text><path d="M11 11L15 15" stroke="#777" stroke-width="2"/></svg>
<div style="left:954px;top:147px;width:131px;height:18px;background:#fff"></div>
<div style="left:1074px;top:148px;width:10px;height:16px;background:#f0f0f0"></div>
<svg style="position:absolute;left:1076px;top:155px" width="7" height="4" viewBox="0 0 7 4"><path d="M0 0H7L3.5 4Z" fill="#000"/></svg>
<div class="t" style="left:956px;top:149px;font-size:12px;color:#111">Top 20</div>
<svg style="position:absolute;left:198px;top:173px" width="17" height="17" viewBox="0 0 16 16"><path d="M1 0L9 6L1 12Z" fill="#30b040" stroke="#208030" stroke-width="0.5"/><rect x="5" y="10" width="11" height="6" fill="#dde8f8" stroke="#6a96d8" stroke-width="0.8"/><text x="10.5" y="15" font-size="5" font-family="Liberation Sans" font-weight="bold" text-anchor="middle" fill="#d03030">&lt;·&gt;</text></svg>
<svg style="position:absolute;left:222px;top:180px" width="7" height="4" viewBox="0 0 7 4"><path d="M0 0H7L3.5 4Z" fill="#000"/></svg>
<svg style="position:absolute;left:234px;top:173px" width="17" height="17" viewBox="0 0 16 16"><path d="M1 2L9 8L1 14Z" fill="#ddd"/><circle cx="10" cy="10" r="5.5" fill="#ddd" stroke="#ccc"/><path d="M7 13L13 7" stroke="#fff" stroke-width="2"/></svg>
<svg style="position:absolute;left:257px;top:180px" width="7" height="4" viewBox="0 0 7 4"><path d="M0 0H7L3.5 4Z" fill="#bdbdbd"/></svg>
<div style="left:269px;top:170px;width:1px;height:22px;background:#c9c9c9"></div>
<svg style="position:absolute;left:275px;top:173px" width="17" height="17" viewBox="0 0 16 16"><path d="M1 0L9 6L1 12Z" fill="#30b040"/><path d="M6 4H15L14 14H5Z" fill="#c8dcf8" stroke="#5a86c8" stroke-width="0.8"/><path d="M8 7H13M8 9H13M8 11H12" stroke="#7aa0e0"/></svg>
<svg style="position:absolute;left:299px;top:180px" width="7" height="4" viewBox="0 0 7 4"><path d="M0 0H7L3.5 4Z" fill="#000"/></svg>
<div style="left:310px;top:170px;width:1px;height:22px;background:#c9c9c9"></div>
<svg style="position:absolute;left:316px;top:173px" width="17" height="17" viewBox="0 0 16 16"><path d="M2 1V15M2 3H5M2 8H5M2 13H5" stroke="#333"/><rect x="5" y="1" width="10" height="3" fill="#e8d090" stroke="#555" stroke-width="0.5"/><rect x="5" y="5.5" width="10" height="3" fill="#d03030"/><rect x="5" y="9" width="10" height="2.5" fill="#30a0d0"/><rect x="5" y="12" width="10" height="3" fill="#e8d090" stroke="#555" stroke-width="0.5"/></svg>
<div style="left:340px;top:170px;width:1px;height:22px;background:#c9c9c9"></div>
<svg style="position:absolute;left:347px;top:173px" width="17" height="17" viewBox="0 0 16 16"><circle cx="8" cy="2" r="1.3" fill="#3a70d0"/><circle cx="12" cy="2" r="1.3" fill="#3a70d0"/><circle cx="8" cy="6" r="1.3" fill="#3a70d0"/><circle cx="12" cy="6" r="1.3" fill="#3a70d0"/><circle cx="12" cy="10" r="1.3" fill="#3a70d0"/><path d="M4 7L10 11L4 15Z" fill="#f0d030" stroke="#a09010" stroke-width="0.6"/><path d="M1 9V15" stroke="#333"/></svg>
<svg style="position:absolute;left:371px;top:180px" width="7" height="4" viewBox="0 0 7 4"><path d="M0 0H7L3.5 4Z" fill="#000"/></svg>
<div style="left:382px;top:170px;width:1px;height:22px;background:#c9c9c9"></div>
<svg style="position:absolute;left:388px;top:173px" width="17" height="17" viewBox="0 0 16 16"><ellipse cx="8" cy="9.5" rx="4.5" ry="5.5" fill="#40a040" stroke="#2a7030" stroke-width="0.6"/><ellipse cx="8" cy="3.5" rx="2.5" ry="2" fill="#3a8a3a"/><path d="M1 5L4 7.5M1 10H3.5M1.5 14L4 12M15 5L12 7.5M15 10H12.5M14.5 14L12 12" stroke="#2a7030" stroke-width="1.2"/><path d="M8 5V15" stroke="#206020" stroke-width="0.6"/></svg>
<svg style="position:absolute;left:414px;top:173px" width="17" height="17" viewBox="0 0 16 16"><text x="8" y="12.5" font-size="10.5" font-family="Liberation Sans" font-weight="bold" text-anchor="middle" fill="#2a90d8">(x)</text></svg>
<div style="left:437px;top:170px;width:1px;height:22px;background:#c9c9c9"></div>
<svg style="position:absolute;left:443px;top:173px" width="17" height="17" viewBox="0 0 16 16"><path d="M2 11Q3 3 9 4Q13 5 13 9" stroke="#2a80d8" stroke-width="2.8" fill="none"/><path d="M9.5 8H16L12.8 12.5Z" fill="#2a80d8"/><circle cx="3.5" cy="13" r="2.2" fill="#2a80d8"/></svg>
<svg style="position:absolute;left:467px;top:173px" width="17" height="17" viewBox="0 0 16 16"><path d="M6 1H10V6H13L8 11L3 6H6Z" fill="#3a90e0"/><circle cx="8" cy="13.5" r="2" fill="#3a90e0"/></svg>
<svg style="position:absolute;left:491px;top:173px" width="17" height="17" viewBox="0 0 16 16"><path d="M6 15H10V10H13L8 5L3 10H6Z" fill="#ddd"/><circle cx="8" cy="2.5" r="2" fill="#ddd"/></svg>
<svg style="position:absolute;left:514px;top:173px" width="17" height="17" viewBox="0 0 16 16"><path d="M1 2L7 8L1 14Z" fill="#3a80d0"/><path d="M8 2H14M11 2V14M8 14H14" stroke="#3a80d0" stroke-width="2"/></svg>
<div style="left:538px;top:170px;width:1px;height:22px;background:#c9c9c9"></div>
<svg style="position:absolute;left:545px;top:173px" width="17" height="17" viewBox="0 0 16 16"><circle cx="7" cy="10" r="6.3" fill="#e82020"/><circle cx="6" cy="8" r="3" fill="#ff6a5a" opacity="0.5"/><rect x="1.5" y="9" width="11" height="2.2" fill="#fff"/><circle cx="13" cy="3.5" r="3.4" fill="#5ac040" stroke="#3a9a2a" stroke-width="0.6"/><path d="M13 1.6V5.4M11.1 3.5H14.9" stroke="#fff" stroke-width="1.2"/></svg>
<svg style="position:absolute;left:569px;top:173px" width="17" height="17" viewBox="0 0 16 16"><path d="M1 12Q6 5 13 9Q9 16 1 12Z" fill="#fff" stroke="#2a4aa0" stroke-width="1.2"/><circle cx="7.2" cy="11" r="2.4" fill="#3a90d8"/><circle cx="7.2" cy="11" r="1" fill="#123"/><circle cx="13" cy="3.5" r="3.4" fill="#5ac040" stroke="#3a9a2a" stroke-width="0.6"/><path d="M13 1.6V5.4M11.1 3.5H14.9" stroke="#fff" stroke-width="1.2"/></svg>
<div style="left:592px;top:170px;width:1px;height:22px;background:#c9c9c9"></div>
<svg style="position:absolute;left:599px;top:173px" width="17" height="17" viewBox="0 0 16 16"><rect x="0.5" y="2.5" width="6" height="6" fill="#cfe0f8" stroke="#3a6ac8"/><rect x="3" y="0.5" width="6" height="6" fill="#bcd0f4" stroke="#3a6ac8"/><circle cx="12.5" cy="2.5" r="2" fill="#f0a050"/><rect x="10.5" y="4.5" width="4" height="4" fill="#3a80d8"/><path d="M1 15L6 12" stroke="#d8b030" stroke-width="1.6"/><path d="M6 11Q6 8 10 8H12V15H10Q6 15 6 12Z" fill="#a8c0f0" stroke="#5a6ac8" stroke-width="0.7"/><path d="M12 10H15M12 13H15" stroke="#5a6ac8" stroke-width="1.2"/></svg>
<div style="left:623px;top:170px;width:1px;height:22px;background:#c9c9c9"></div>
<svg style="position:absolute;left:630px;top:173px" width="17" height="17" viewBox="0 0 16 16"><path d="M4 0H11L7.5 4H10L3 9.5L5 5H2.5Z" fill="#f5c820" stroke="#c09010" stroke-width="0.5"/><ellipse cx="7" cy="11.5" rx="3.5" ry="4.3" fill="#30a030"/><path d="M2 9L4 10M2 13L4 12M12 9L10 10" stroke="#207020"/><circle cx="12" cy="11.5" r="4" fill="#50b050" stroke="#2a8a2a" stroke-width="0.6"/><path d="M12 8.8V11.5M10.2 10.2A2.4 2.4 0 1 0 13.8 10.2" stroke="#fff" fill="none" stroke-width="1"/></svg>
<svg style="position:absolute;left:654px;top:173px" width="17" height="17" viewBox="0 0 16 16"><path d="M4 0H11L7.5 4H10L3 9.5L5 5H2.5Z" fill="#f5c820" stroke="#c09010" stroke-width="0.5"/><ellipse cx="7" cy="11.5" rx="3.5" ry="4.3" fill="#30a030"/><path d="M2 9L4 10M2 13L4 12" stroke="#207020"/><circle cx="12" cy="11.5" r="4" fill="#e84050" stroke="#b02030" stroke-width="0.6"/><rect x="11.2" y="9.3" width="1.6" height="4.4" fill="#fff"/></svg>
<svg style="position:absolute;left:677px;top:185px" width="7" height="4" viewBox="0 0 7 4"><path d="M0 0H7L3.5 4Z" fill="#000"/></svg>
<div style="left:688px;top:170px;width:1px;height:22px;background:#c9c9c9"></div>
<svg style="position:absolute;left:693px;top:173px" width="17" height="17" viewBox="0 0 16 16"><g opacity="0.32" filter="url(#gray)"><rect x="1" y="2" width="11" height="13" fill="#e0e0e0" stroke="#aaa"/><circle cx="11" cy="13" r="2" fill="none" stroke="#999"/><path d="M9 7L15 13" stroke="#999"/></g></svg>
<svg style="position:absolute;left:717px;top:173px" width="17" height="17" viewBox="0 0 16 16"><path d="M1.5 0.5H8L11.5 4V15.5H1.5Z" fill="#ebebeb" stroke="#c4c4c4"/><rect x="7.5" y="8.5" width="8" height="7" fill="#dcdcdc" stroke="#b8b8b8"/><path d="M9 4Q13 3 13 7" stroke="#b8b8b8" fill="none"/></svg>
<svg style="position:absolute;left:741px;top:173px" width="17" height="17" viewBox="0 0 16 16"><rect x="0.5" y="2.5" width="9" height="9" fill="#dedede" stroke="#b8b8b8"/><rect x="2.5" y="3" width="5" height="3" fill="#f4f4f4"/><path d="M10.5 0.5H15.5V15.5H7.5V12" fill="#ebebeb" stroke="#c4c4c4"/><path d="M11 8L13 11L15 8" stroke="#b8b8b8" fill="none"/></svg>
<div style="left:765px;top:170px;width:1px;height:22px;background:#c9c9c9"></div>
<svg style="position:absolute;left:771px;top:173px" width="17" height="17" viewBox="0 0 16 16"><rect x="1" y="1" width="5" height="4" fill="#fff" stroke="#4a72c4"/><rect x="1" y="6" width="5" height="4" fill="#fff" stroke="#4a72c4"/><rect x="1" y="11" width="5" height="4" fill="#fff" stroke="#4a72c4"/><path d="M8 3L10 5L14 0M8 8L10 10L14 5M8 13L10 15L14 10" stroke="#30a030" stroke-width="1.3" fill="none"/></svg>
<svg style="position:absolute;left:795px;top:173px" width="17" height="17" viewBox="0 0 16 16"><rect x="1" y="1" width="9" height="11" fill="#dde8f8" stroke="#5a86c8"/><rect x="4" y="4" width="9" height="11" fill="#e8f0fc" stroke="#5a86c8"/><path d="M9 13L14 8L16 10L11 15Z" fill="#e04060"/></svg>
<div style="left:819px;top:170px;width:1px;height:22px;background:#c9c9c9"></div>
<svg style="position:absolute;left:826px;top:173px" width="17" height="17" viewBox="0 0 16 16"><rect x="2" y="3" width="5" height="12" rx="1.5" fill="#777" stroke="#333" stroke-width="0.6"/><rect x="9" y="3" width="5" height="12" rx="1.5" fill="#777" stroke="#333" stroke-width="0.6"/><rect x="6" y="5" width="4" height="4" fill="#555"/><rect x="3" y="1" width="3" height="3" fill="#999"/><rect x="10" y="1" width="3" height="3" fill="#999"/></svg>
<svg style="position:absolute;left:849px;top:180px" width="7" height="4" viewBox="0 0 7 4"><path d="M0 0H7L3.5 4Z" fill="#000"/></svg>
<svg style="position:absolute;left:861px;top:173px" width="17" height="17" viewBox="0 0 16 16"><rect x="1" y="1" width="4" height="8" rx="1" fill="#ccc"/><rect x="6" y="1" width="4" height="8" rx="1" fill="#ccc"/><path d="M6 13H14M11 10L14 13L11 16" stroke="#ccc" stroke-width="1.5" fill="none"/></svg>
<svg style="position:absolute;left:885px;top:173px" width="17" height="17" viewBox="0 0 16 16"><rect x="2" y="1" width="5" height="8" rx="1" fill="#777" stroke="#333" stroke-width="0.6"/><rect x="9" y="1" width="5" height="8" rx="1" fill="#777" stroke="#333" stroke-width="0.6"/><text x="8" y="15.8" font-size="8" font-family="Liberation Sans" text-anchor="middle" fill="#3030d0">a→b</text></svg>
<svg style="position:absolute;left:909px;top:180px" width="7" height="4" viewBox="0 0 7 4"><path d="M0 0H7L3.5 4Z" fill="#000"/></svg>
<div style="left:920px;top:170px;width:1px;height:22px;background:#c9c9c9"></div>
<svg style="position:absolute;left:927px;top:173px" width="17" height="17" viewBox="0 0 16 16"><path d="M15.5 14Q15.5 5 7.5 5V1.5L0.5 7.5L7.5 13.5V9.5Q12.5 9.5 15.5 14Z" fill="#d2d2d2"/></svg>
<svg style="position:absolute;left:951px;top:173px" width="17" height="17" viewBox="0 0 16 16"><path d="M0.5 14Q0.5 5 8.5 5V1.5L15.5 7.5L8.5 13.5V9.5Q3.5 9.5 0.5 14Z" fill="#d2d2d2"/></svg>
<div style="left:974px;top:170px;width:1px;height:22px;background:#c9c9c9"></div>
<svg style="position:absolute;left:982px;top:173px" width="17" height="17" viewBox="0 0 16 16"><text x="0.5" y="15.5" font-size="10.5" font-family="Liberation Sans" textLength="15" lengthAdjust="spacingAndGlyphs" fill="#c8c8c8">ABC</text><path d="M3 1Q2 3.5 5 3.5" stroke="#c8c8c8" fill="none"/></svg>
<svg style="position:absolute;left:1005px;top:173px" width="17" height="17" viewBox="0 0 16 16"><text x="0.5" y="15.5" font-size="10.5" font-family="Liberation Sans" textLength="15" lengthAdjust="spacingAndGlyphs" fill="#c8c8c8">abc</text><path d="M3 1Q2 3.5 5 3.5" stroke="#c8c8c8" fill="none"/></svg>
<svg style="position:absolute;left:1029px;top:173px" width="17" height="17" viewBox="0 0 16 16"><text x="0.5" y="15.5" font-size="10.5" font-family="Liberation Sans" textLength="15" lengthAdjust="spacingAndGlyphs" fill="#c8c8c8">Abc</text><path d="M3 1Q2 3.5 5 3.5" stroke="#c8c8c8" fill="none"/></svg>
<div style="left:1053px;top:170px;width:1px;height:22px;background:#c9c9c9"></div>
<svg style="position:absolute;left:1060px;top:173px" width="17" height="17" viewBox="0 0 16 16"><path d="M4 3H15M7 6H15M7 9H12M7 12H15M4 15H15" stroke="#111" stroke-width="1.8"/><path d="M4 1V16" stroke="#555" stroke-width="0.6" stroke-dasharray="1 1"/><path d="M0 7.5L2.5 5V10Z" fill="#1a2ab0"/><path d="M2 7.5H5" stroke="#1a2ab0" stroke-width="1.5"/></svg>
<div style="left:1083px;top:174px;width:8px;height:17px;overflow:hidden"></div>
<svg style="position:absolute;left:1083px;top:174px" width="8" height="17" viewBox="0 0 8 17"><path d="M4 5H8M4 8H8M4 11H8" stroke="#111" stroke-width="1.6"/><path d="M0 8L3 6V10Z" fill="#1a2ad0"/></svg>
<svg style="position:absolute;left:198px;top:201px" width="17" height="17" viewBox="0 0 16 16"><path d="M1 2L5 6L1 10Z" fill="#ddd"/><path d="M6 3H9V7L14 15H2L6 7Z" fill="#eee" stroke="#ccc"/></svg>
<svg style="position:absolute;left:224px;top:201px" width="17" height="17" viewBox="0 0 16 16"><path d="M4.5 3H8.5V7.5L13 15.5H0L4.5 7.5Z" fill="#eef6f6" stroke="#8ab0b0" stroke-width="0.8"/><path d="M2 11.5H11L13 15.3H0.2Z" fill="#3aaa60"/><path d="M11 0H14V3H16.5V6H14V9H11V6H8V3H11Z" fill="#20b040"/></svg>
<svg style="position:absolute;left:246px;top:201px" width="17" height="17" viewBox="0 0 16 16"><rect x="0.5" y="0.5" width="15" height="15" rx="1" fill="#fff" stroke="#3a78d8"/><rect x="1" y="1" width="14" height="2.6" fill="#4a8ae6"/><rect x="11" y="1.5" width="3" height="1.5" fill="#c8d4e8"/><path d="M6.5 4H9.5V7.5L13.5 14H2.5L6.5 7.5Z" fill="#eef6f6" stroke="#9ab8b8" stroke-width="0.7"/><path d="M4.5 10.5H11.5L13.3 13.8H2.7Z" fill="#3aaa60"/></svg>
<svg style="position:absolute;left:272px;top:201px" width="17" height="17" viewBox="0 0 16 16"><path d="M1.5 1.5H13V15.5H1.5Z" fill="#e0ecfa" stroke="#3a70d0"/><rect x="1.5" y="1.5" width="11.5" height="3" fill="#3a70d0"/><path d="M3 7H11" stroke="#8ab"/><text x="7" y="14" font-size="5.5" font-family="Liberation Sans" font-weight="bold" text-anchor="middle" fill="#d03030">&lt;&gt;</text></svg>
<svg style="position:absolute;left:295px;top:201px" width="17" height="17" viewBox="0 0 16 16"><circle cx="8" cy="8" r="7" fill="#e4e4e4" stroke="#d0d0d0"/><path d="M6 4L12 8L6 12Z" fill="#fff"/></svg>
<svg style="position:absolute;left:318px;top:213px" width="7" height="4" viewBox="0 0 7 4"><path d="M0 0H7L3.5 4Z" fill="#000"/></svg>
<div style="left:328px;top:198px;width:1px;height:22px;background:#c9c9c9"></div>
<svg style="position:absolute;left:333px;top:201px" width="17" height="17" viewBox="0 0 16 16"><circle cx="6" cy="6" r="5" fill="#f0d030" stroke="#c0a010" stroke-width="0.8"/><circle cx="6" cy="6" r="2" fill="#fff8d0"/><path d="M9 10A4 4 0 0 0 15 12" stroke="#30a030" stroke-width="1.6" fill="none"/><path d="M10 14A4 4 0 0 1 14 9" stroke="#30a030" stroke-width="1.6" fill="none"/></svg>
<div style="left:357px;top:198px;width:1px;height:22px;background:#c9c9c9"></div>
<svg style="position:absolute;left:364px;top:201px" width="17" height="17" viewBox="0 0 16 16"><path d="M2.5 0.5H9L12.5 4V15.5H2.5Z" fill="#ebebeb" stroke="#c4c4c4"/><circle cx="9.5" cy="11" r="3.6" fill="#e4e4e4" stroke="#b8b8b8"/><path d="M9.5 9V13M7.5 11H11.5" stroke="#b8b8b8" stroke-width="1.2"/></svg>
<svg style="position:absolute;left:387px;top:201px" width="17" height="17" viewBox="0 0 16 16"><rect x="1.5" y="0.5" width="7" height="9" fill="#ebebeb" stroke="#c4c4c4"/><rect x="7.5" y="7.5" width="8" height="8" fill="#e0e0e0" stroke="#b8b8b8"/><rect x="9.5" y="8" width="4" height="3" fill="#f4f4f4"/><path d="M3 12Q3 15 6 15" stroke="#b8b8b8" fill="none"/></svg>
<svg style="position:absolute;left:410px;top:201px" width="17" height="17" viewBox="0 0 16 16"><rect x="0.5" y="0.5" width="9" height="9" fill="#dedede" stroke="#b8b8b8"/><rect x="2.5" y="1" width="5" height="3" fill="#f4f4f4"/><rect x="7.5" y="6.5" width="8" height="9" fill="#ebebeb" stroke="#c4c4c4"/><path d="M10 10L12 13L14 10" stroke="#b8b8b8" fill="none"/></svg>
<svg style="position:absolute;left:433px;top:201px" width="17" height="17" viewBox="0 0 16 16"><rect x="0.5" y="2.5" width="9" height="9" fill="#dedede" stroke="#b8b8b8"/><rect x="2.5" y="3" width="5" height="3" fill="#f4f4f4"/><path d="M10.5 0.5H15.5V15.5H7.5V12" fill="#ebebeb" stroke="#c4c4c4"/><path d="M11 8L13 11L15 8" stroke="#b8b8b8" fill="none"/></svg>
<svg style="position:absolute;left:460px;top:201px" width="17" height="17" viewBox="0 0 16 16"><path d="M1.5 0.5H8L11.5 4V15.5H1.5Z" fill="#ebebeb" stroke="#c4c4c4"/><rect x="7.5" y="8.5" width="8" height="7" fill="#dcdcdc" stroke="#b8b8b8"/><path d="M9 4Q13 3 13 7" stroke="#b8b8b8" fill="none"/></svg>
<div style="left:484px;top:198px;width:1px;height:22px;background:#c9c9c9"></div>
<svg style="position:absolute;left:491px;top:201px" width="17" height="17" viewBox="0 0 16 16"><rect x="1.5" y="0.5" width="5" height="10" fill="#ebebeb" stroke="#c4c4c4"/><rect x="9.5" y="0.5" width="5" height="10" fill="#ebebeb" stroke="#c4c4c4"/><path d="M3 4H5M3 6H5M11 4H13M11 6H13" stroke="#b8b8b8"/><path d="M2 13.5H14M2 13.5L4 11.5M2 13.5L4 15.5M14 13.5L12 11.5M14 13.5L12 15.5" stroke="#b8b8b8" fill="none"/></svg>
<svg style="position:absolute;left:514px;top:201px" width="17" height="17" viewBox="0 0 16 16"><rect x="1.5" y="0.5" width="8" height="11" fill="#ebebeb" stroke="#c4c4c4"/><rect x="4.5" y="3.5" width="8" height="11" fill="#f0f0f0" stroke="#c4c4c4"/><path d="M12.5 10L13.5 12.5H16L14 14L15 16L12.5 14.5L10 16L11 14L9 12.5H11.5Z" fill="#dadada" stroke="#b8b8b8" stroke-width="0.5"/></svg>
<div style="left:538px;top:198px;width:1px;height:22px;background:#c9c9c9"></div>
<svg style="position:absolute;left:544px;top:201px" width="17" height="17" viewBox="0 0 16 16"><circle cx="9" cy="5" r="3.5" fill="#dcdcdc" stroke="#b8b8b8"/><path d="M3 16Q3 9 9 9Q15 9 15 16Z" fill="#d8d8d8" stroke="#b8b8b8"/><path d="M3 1L6 4M4.5 0.5V4" stroke="#b8b8b8"/></svg>
<svg style="position:absolute;left:568px;top:201px" width="17" height="17" viewBox="0 0 16 16"><path d="M0.5 5.5L8 1.5L15.5 5.5V15.5H0.5Z" fill="#ebebeb" stroke="#c4c4c4"/><path d="M0.5 5.5L8 10L15.5 5.5" stroke="#b8b8b8" fill="none"/><path d="M3 4L8 7L13 3" stroke="#d0d0d0" fill="none"/></svg>
<svg style="position:absolute;left:592px;top:213px" width="7" height="4" viewBox="0 0 7 4"><path d="M0 0H7L3.5 4Z" fill="#000"/></svg>
<div style="left:188px;top:193px;width:5px;height:503px;background:#ebebeb"></div>
<div style="left:193px;top:224px;width:7px;height:472px;background:#fafafa;border-left:1px solid #dedede"></div>
<div style="left:193px;top:224px;width:195px;height:27px;background:#fff"></div>
<div style="left:193px;top:248px;width:898px;height:3px;background:#fbfbfb"></div>
<svg style="position:absolute;left:200px;top:228px" width="19" height="16" viewBox="0 0 19 16"><text x="0.3" y="13.9" font-family="Liberation Serif" font-style="italic" font-weight="bold" font-size="15" fill="#38387e">P</text><path d="M13 7Q10.3 10.5 11.2 13.6" stroke="#38387e" stroke-width="1.3" fill="none"/><path d="M15.6 6.8Q17.6 10 14.2 13.6" stroke="#38387e" stroke-width="1.3" fill="none"/></svg>
<div class="t" style="left:225px;top:229px;font-size:12px;color:#111;letter-spacing:-0.5px">MANIPULATE_EMP_DEPT</div>
<div style="left:370px;top:230px;width:12px;height:12px;background:#d84848;border:1px solid #c83838"></div>
<svg style="position:absolute;left:373px;top:233px" width="6" height="6" viewBox="0 0 6 6"><path d="M0.5 0.5L5.5 5.5M5.5 0.5L0.5 5.5" stroke="#fff" stroke-width="1.3"/></svg>
<div style="left:388px;top:226px;width:31px;height:22px;background:#f0f0f0;border:1px solid #d9d9d9;border-bottom:none"></div>
<svg style="position:absolute;left:398px;top:232px" width="10" height="10" viewBox="0 0 10 10"><path d="M5 0.5V9.5M0.5 5H9.5" stroke="#000" stroke-width="2"/></svg>
<div style="left:200px;top:255px;width:204px;height:19px;border:1px solid #b5b5b5;border-radius:2px;background:#f0f0f0"></div>
<div class="t" style="left:204px;top:258px;font-size:12px;color:#111">Navigator</div>
<svg style="position:absolute;left:372px;top:258px" width="9" height="12" viewBox="0 0 9 12"><path d="M2 1H7V2H6V7H7.5V8H5V11H4V8H1.5V7H3V2H2Z" fill="#000"/></svg>
<svg style="position:absolute;left:388px;top:260px" width="9" height="9" viewBox="0 0 9 9"><path d="M0.5 0.5L8.5 8.5M8.5 0.5L0.5 8.5" stroke="#333" stroke-width="1.1"/></svg>
<div style="left:200px;top:275px;width:204px;height:23px;border:1px solid #d0d0d0;border-radius:2px;background:#f0f0f0"></div>
<svg style="position:absolute;left:207px;top:281px" width="11" height="13" viewBox="0 0 11 13"><path d="M1.6 8Q1.4 4.6 4.2 3.8" stroke="#089a28" stroke-width="1.8" fill="none"/><path d="M3.8 0.4L7.4 3.6L3.8 6.6Z" fill="#089a28"/><path d="M8.6 4.6Q8.8 8 6 8.6" stroke="#089a28" stroke-width="1.8" fill="none"/><path d="M6.2 5.6L2.6 8.7L6.2 11.8Z" fill="#089a28"/></svg>
<div style="left:200px;top:298px;width:204px;height:393px;background:#fff;border:1px solid #828282"></div>
<div style="left:201px;top:301px;width:202px;height:18px;background:#d9d9d9"></div>
<svg style="position:absolute;left:211px;top:306px" width="10" height="7" viewBox="0 0 10 7"><path d="M0.8 0.8L5 5L9.2 0.8" stroke="#333" stroke-width="1.6" fill="none"/></svg>
<svg style="position:absolute;left:226px;top:302px" width="19" height="16" viewBox="0 0 19 16"><text x="0.3" y="13.9" font-family="Liberation Serif" font-style="italic" font-weight="bold" font-size="15" fill="#38387e">P</text><path d="M13 7Q10.3 10.5 11.2 13.6" stroke="#38387e" stroke-width="1.3" fill="none"/><path d="M15.6 6.8Q17.6 10 14.2 13.6" stroke="#38387e" stroke-width="1.3" fill="none"/></svg>
<div class="t" style="left:250px;top:303px;font-size:12px;color:#111">manipulate_emp_dept</div>
<svg style="position:absolute;left:230px;top:325px" width="10" height="7" viewBox="0 0 10 7"><path d="M0.8 0.8L5 5L9.2 0.8" stroke="#333" stroke-width="1.6" fill="none"/></svg>
<svg style="position:absolute;left:245px;top:321px" width="17" height="14" viewBox="0 0 17 14"><path d="M0.5 1H6L7.5 2.5H16.5V13.5H0.5Z" fill="#f5d060" stroke="#b08a20" stroke-width="0.8"/><path d="M0.5 4.5H16.5" stroke="#d8b040" stroke-width="0.8"/></svg>
<div class="t" style="left:268px;top:322px;font-size:12px;color:#111">Declarations</div>
<div style="left:253px;top:338px;width:1px;height:66px;background:repeating-linear-gradient(180deg,#a0a0a0 0 1px,transparent 1px 2px)"></div>
<div style="left:254px;top:348px;width:11px;height:1px;background:repeating-linear-gradient(90deg,#a0a0a0 0 1px,transparent 1px 2px)"></div>
<div class="t" style="left:268px;top:342px;font-family:'Liberation Serif',serif;font-weight:bold;font-style:italic;font-size:12.5px;color:#1a1ab0;line-height:14px;-webkit-text-stroke:0.4px #1a1ab0">i</div>
<div class="t" style="left:287px;top:341.5px;font-size:11.3px;color:#111;letter-spacing:-0.15px">v_dept_name: DEP...</div>
<div style="left:254px;top:367px;width:11px;height:1px;background:repeating-linear-gradient(90deg,#a0a0a0 0 1px,transparent 1px 2px)"></div>
<div class="t" style="left:268px;top:361px;font-family:'Liberation Serif',serif;font-weight:bold;font-style:italic;font-size:12.5px;color:#1a1ab0;line-height:14px;-webkit-text-stroke:0.4px #1a1ab0">i</div>
<div class="t" style="left:287px;top:360.5px;font-size:11.3px;color:#111;letter-spacing:-0.15px">v_emp_id: EMP.EM...</div>
<div style="left:254px;top:385px;width:11px;height:1px;background:repeating-linear-gradient(90deg,#a0a0a0 0 1px,transparent 1px 2px)"></div>
<div class="t" style="left:268px;top:379px;font-family:'Liberation Serif',serif;font-weight:bold;font-style:italic;font-size:12.5px;color:#1a1ab0;line-height:14px;-webkit-text-stroke:0.4px #1a1ab0">i</div>
<div class="t" style="left:287px;top:378.5px;font-size:11.3px;color:#111;letter-spacing:-0.15px">v_emp_name: EMP....</div>
<div style="left:254px;top:404px;width:11px;height:1px;background:repeating-linear-gradient(90deg,#a0a0a0 0 1px,transparent 1px 2px)"></div>
<div class="t" style="left:268px;top:398px;font-family:'Liberation Serif',serif;font-weight:bold;font-style:italic;font-size:12.5px;color:#1a1ab0;line-height:14px;-webkit-text-stroke:0.4px #1a1ab0">i</div>
<div class="t" style="left:287px;top:397.5px;font-size:11.3px;color:#111;letter-spacing:-0.15px">v_salary: EMP.SAL%...</div>
<div style="left:412px;top:252px;width:680px;height:441px;background:#fff;border:1px solid #828282;border-right-color:#a0a0a0"></div>
<div style="left:413px;top:253px;width:49px;height:422px;background:#f3f3f3"></div>
<div style="left:462px;top:253px;width:14px;height:422px;background:#fafafa"></div>
<div style="left:480px;top:254px;width:611px;height:15px;background:#e6f0fc"></div>
<div style="left:480px;top:254px;width:1px;height:15px;background:#555"></div>
<div style="left:1064px;top:253px;width:1px;height:422px;background:#d4d4d4"></div>
<div style="left:465px;top:334px;width:11px;height:11px;border:1px solid #888;background:#fff"></div>
<div style="left:467px;top:339px;width:7px;height:1px;background:#444"></div>
<div style="left:470px;top:345px;width:1px;height:330px;background:#888"></div>
<div class="code" style="left:480.5px;top:256.30px"><span class="kw">CREATE OR REPLACE PROCEDURE</span> <span class="id">SCOTT.manipulate_emp_dept</span> <span class="kw">IS</span></div>
<div class="code" style="left:413px;top:256.50px;width:29.5px;text-align:right;color:#8a8a8a;font-size:12.13px">1</div>
<svg style="position:absolute;left:451.5px;top:259.90000000000003px" width="5" height="5" viewBox="0 0 5 5"><path d="M2.5 0L5 2.5L2.5 5L0 2.5Z" fill="#0000e0"/></svg>
<div class="code" style="left:480.5px;top:271.93px">  v_emp_id     <span class="id">EMP.EMPNO</span><span class="kw">%TYPE;</span></div>
<div class="code" style="left:413px;top:272.13px;width:29.5px;text-align:right;color:#8a8a8a;font-size:12.13px">2</div>
<div class="code" style="left:480.5px;top:287.56px">  v_emp_name   <span class="id">EMP.ENAME</span><span class="kw">%TYPE;</span></div>
<div class="code" style="left:413px;top:287.76px;width:29.5px;text-align:right;color:#8a8a8a;font-size:12.13px">3</div>
<div class="code" style="left:480.5px;top:303.19px">  v_salary     <span class="id">EMP.SAL</span><span class="kw">%TYPE;</span></div>
<div class="code" style="left:413px;top:303.39px;width:29.5px;text-align:right;color:#8a8a8a;font-size:12.13px">4</div>
<div class="code" style="left:480.5px;top:318.82px">  v_dept_name  <span class="id">DEPT.DNAME</span><span class="kw">%TYPE;</span></div>
<div class="code" style="left:413px;top:319.02px;width:29.5px;text-align:right;color:#8a8a8a;font-size:12.13px">5</div>
<div class="code" style="left:480.5px;top:334.45px"><span class="kw">BEGIN</span></div>
<div class="code" style="left:413px;top:334.65px;width:29.5px;text-align:right;color:#8a8a8a;font-size:12.13px">6</div>
<svg style="position:absolute;left:451.5px;top:338.05000000000007px" width="5" height="5" viewBox="0 0 5 5"><path d="M2.5 0L5 2.5L2.5 5L0 2.5Z" fill="#0000e0"/></svg>
<div class="code" style="left:480.5px;top:350.08px">  <span class="cm">-- FETCH: EMP<span class="jp">テーブルから従業員の情報を取得</span></span></div>
<div class="code" style="left:413px;top:350.28px;width:29.5px;text-align:right;color:#8a8a8a;font-size:12.13px">7</div>
<div class="code" style="left:480.5px;top:365.71px">  <span class="kw">SELECT</span> EMPNO<span class="pu">,</span> ENAME<span class="pu">,</span> SAL<span class="pu">,</span> DEPTNO</div>
<div class="code" style="left:413px;top:365.91px;width:29.5px;text-align:right;color:#8a8a8a;font-size:12.13px">8</div>
<svg style="position:absolute;left:451.5px;top:369.31000000000006px" width="5" height="5" viewBox="0 0 5 5"><path d="M2.5 0L5 2.5L2.5 5L0 2.5Z" fill="#0000e0"/></svg>
<div class="code" style="left:480.5px;top:381.34px">  <span class="kw">INTO</span> v_emp_id<span class="pu">,</span> v_emp_name<span class="pu">,</span> v_salary<span class="pu">,</span> v_dept_name</div>
<div class="code" style="left:413px;top:381.54px;width:29.5px;text-align:right;color:#8a8a8a;font-size:12.13px">9</div>
<div class="code" style="left:480.5px;top:396.97px">  <span class="kw">FROM</span> <span class="id">EMP</span></div>
<div class="code" style="left:413px;top:397.17px;width:29.5px;text-align:right;color:#8a8a8a;font-size:12.13px">10</div>
<div class="code" style="left:480.5px;top:412.60px">  <span class="kw">WHERE ROWNUM</span> <span class="pu">=</span> <span class="nu">1</span><span class="pu">;</span></div>
<div class="code" style="left:413px;top:412.80px;width:29.5px;text-align:right;color:#8a8a8a;font-size:12.13px">11</div>
<div class="code" style="left:480.5px;top:428.23px"></div>
<div class="code" style="left:413px;top:428.43px;width:29.5px;text-align:right;color:#8a8a8a;font-size:12.13px">12</div>
<div class="code" style="left:480.5px;top:443.86px">  <span class="cm">-- <span class="jp" style="letter-spacing:-0.5px">データを表示</span></span></div>
<div class="code" style="left:413px;top:444.06px;width:29.5px;text-align:right;color:#8a8a8a;font-size:12.13px">13</div>
<div class="code" style="left:480.5px;top:459.49px">  <span class="pk">DBMS_OUTPUT.PUT_LINE</span><span class="pu">(</span><span class="st">'Fetched Employee ID: '</span> <span class="pu">||</span> v_emp_id<span class="pu">);</span></div>
<div class="code" style="left:413px;top:459.69px;width:29.5px;text-align:right;color:#8a8a8a;font-size:12.13px">14</div>
<svg style="position:absolute;left:451.5px;top:463.09000000000003px" width="5" height="5" viewBox="0 0 5 5"><path d="M2.5 0L5 2.5L2.5 5L0 2.5Z" fill="#0000e0"/></svg>
<div class="code" style="left:480.5px;top:475.12px">  <span class="pk">DBMS_OUTPUT.PUT_LINE</span><span class="pu">(</span><span class="st">'Fetched Employee Name: '</span> <span class="pu">||</span> v_emp_name<span class="pu">);</span></div>
<div class="code" style="left:413px;top:475.32px;width:29.5px;text-align:right;color:#8a8a8a;font-size:12.13px">15</div>
<svg style="position:absolute;left:451.5px;top:478.72px" width="5" height="5" viewBox="0 0 5 5"><path d="M2.5 0L5 2.5L2.5 5L0 2.5Z" fill="#0000e0"/></svg>
<div class="code" style="left:480.5px;top:490.75px">  <span class="pk">DBMS_OUTPUT.PUT_LINE</span><span class="pu">(</span><span class="st">'Fetched Salary: '</span> <span class="pu">||</span> v_salary<span class="pu">);</span></div>
<div class="code" style="left:413px;top:490.95px;width:29.5px;text-align:right;color:#8a8a8a;font-size:12.13px">16</div>
<svg style="position:absolute;left:451.5px;top:494.35px" width="5" height="5" viewBox="0 0 5 5"><path d="M2.5 0L5 2.5L2.5 5L0 2.5Z" fill="#0000e0"/></svg>
<div class="code" style="left:480.5px;top:506.38px"></div>
<div class="code" style="left:413px;top:506.58px;width:29.5px;text-align:right;color:#8a8a8a;font-size:12.13px">17</div>
<div class="code" style="left:480.5px;top:522.01px">  <span class="cm">-- FETCH: DEPT<span class="jp">テーブルから部門の情報を取得</span></span></div>
<div class="code" style="left:413px;top:522.21px;width:29.5px;text-align:right;color:#8a8a8a;font-size:12.13px">18</div>
<div class="code" style="left:480.5px;top:537.64px">  <span class="kw">SELECT</span> DNAME</div>
<div class="code" style="left:413px;top:537.84px;width:29.5px;text-align:right;color:#8a8a8a;font-size:12.13px">19</div>
<svg style="position:absolute;left:451.5px;top:541.2400000000001px" width="5" height="5" viewBox="0 0 5 5"><path d="M2.5 0L5 2.5L2.5 5L0 2.5Z" fill="#0000e0"/></svg>
<div class="code" style="left:480.5px;top:553.27px">  <span class="kw">INTO</span> v_dept_name</div>
<div class="code" style="left:413px;top:553.47px;width:29.5px;text-align:right;color:#8a8a8a;font-size:12.13px">20</div>
<div class="code" style="left:480.5px;top:568.90px">  <span class="kw">FROM</span> <span class="id">DEPT</span></div>
<div class="code" style="left:413px;top:569.10px;width:29.5px;text-align:right;color:#8a8a8a;font-size:12.13px">21</div>
<div class="code" style="left:480.5px;top:584.53px">  <span class="kw">WHERE</span> DEPTNO <span class="pu">=</span> v_dept_name<span class="pu">;</span></div>
<div class="code" style="left:413px;top:584.73px;width:29.5px;text-align:right;color:#8a8a8a;font-size:12.13px">22</div>
<div class="code" style="left:480.5px;top:600.16px"></div>
<div class="code" style="left:413px;top:600.36px;width:29.5px;text-align:right;color:#8a8a8a;font-size:12.13px">23</div>
<div class="code" style="left:480.5px;top:615.79px">  <span class="pk">DBMS_OUTPUT.PUT_LINE</span><span class="pu">(</span><span class="st">'Employee belongs to Department: '</span> <span class="pu">||</span> v_dept_name<span class="pu">);</span></div>
<div class="code" style="left:413px;top:615.99px;width:29.5px;text-align:right;color:#8a8a8a;font-size:12.13px">24</div>
<svg style="position:absolute;left:451.5px;top:619.39px" width="5" height="5" viewBox="0 0 5 5"><path d="M2.5 0L5 2.5L2.5 5L0 2.5Z" fill="#0000e0"/></svg>
<div class="code" style="left:480.5px;top:631.42px"></div>
<div class="code" style="left:413px;top:631.62px;width:29.5px;text-align:right;color:#8a8a8a;font-size:12.13px">25</div>
<div class="code" style="left:480.5px;top:647.05px">  <span class="cm">-- UPDATE: <span class="jp" style="letter-spacing:-0.75px">取得したデータの給与をアップデート</span></span></div>
<div class="code" style="left:413px;top:647.25px;width:29.5px;text-align:right;color:#8a8a8a;font-size:12.13px">26</div>
<div class="code" style="left:480.5px;top:662.68px">  <span class="kw">UPDATE</span> <span class="id">EMP</span></div>
<div class="code" style="left:413px;top:662.88px;width:29.5px;text-align:right;color:#8a8a8a;font-size:12.13px">27</div>
<svg style="position:absolute;left:451.5px;top:666.2800000000001px" width="5" height="5" viewBox="0 0 5 5"><path d="M2.5 0L5 2.5L2.5 5L0 2.5Z" fill="#0000e0"/></svg>
<div style="left:413px;top:675px;width:678px;height:17px;background:#f0f0f0"></div>
<div style="left:431px;top:676px;width:593px;height:15px;background:#cdcdcd"></div>
<svg style="position:absolute;left:417px;top:679px" width="8" height="9" viewBox="0 0 8 9"><path d="M6 0.8L2 4.5L6 8.2" stroke="#444" stroke-width="2.2" fill="none"/></svg>
<div style="left:433px;top:51px;width:44px;height:36px;border:5px solid #ff0000"></div>
<div style="left:496px;top:46px;width:373px;height:47px;background:linear-gradient(#f08a50,#f27a30 50%,#e8661a);box-shadow:3px 4px 5px rgba(0,0,0,0.35)"></div>
<div style="left:519px;top:60px;width:1.3px;height:16.5px;background:#fff"></div>
<div style="left:519px;top:60px;width:6px;height:1.3px;background:#fff"></div>
<div class="t" style="left:528px;top:62px;font-size:16px;line-height:18px;color:#fff;letter-spacing:0.33px;-webkit-text-stroke:0">Toggle compiling with Debug</div>
<div style="left:747.4px;top:62px;width:1.3px;height:16.3px;background:#fff"></div>
<div style="left:742.7px;top:77px;width:6px;height:1.3px;background:#fff"></div>
<div class="t" style="left:761px;top:62px;font-size:16px;line-height:18px;color:#fff;letter-spacing:1.6px;-webkit-text-stroke:0">をクリック</div>
</body></html>
